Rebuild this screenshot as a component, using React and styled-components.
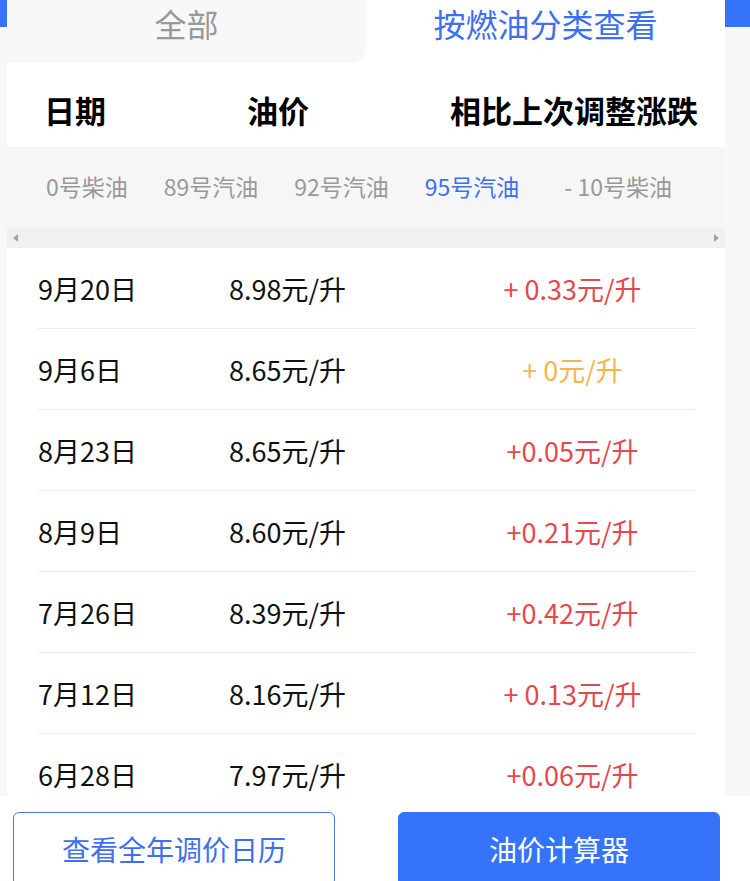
import React, { useState } from "react";
import styled, { createGlobalStyle } from "styled-components";

const GlobalStyle = createGlobalStyle`
  html, body {
    margin: 0;
    padding: 0;
    background: #f8f8f8;
    font-family: "Noto Sans CJK SC", "Noto Sans", sans-serif;
  }
  * {
    box-sizing: border-box;
  }
`;

const Page = styled.div`
  min-height: 881px;
  padding: 0 25px 90px 7px;
  background: linear-gradient(#3574fa 0 27px, #f8f8f8 27px);
`;

const Card = styled.div`
  background: #fff;
`;

const TopTabs = styled.div`
  display: flex;
  height: 63px;
  background: #fff;
`;

const TopTab = styled.div`
  flex: 1;
  text-align: center;
  font-size: 32px;
  line-height: 47px;
  color: ${props => (props.active ? "#3d6ff0" : "#999")};
  background: ${props => (props.active ? "#fff" : "#f8f8f8")};
  border-bottom-right-radius: ${props => (props.active ? "0" : "16px")};
`;

const HeaderRow = styled.div`
  display: flex;
  justify-content: space-between;
  align-items: center;
  height: 84px;
  padding: 8px 27px 0 37px;
  font-size: 31px;
  font-weight: 700;
  color: #000;
`;

const FuelBar = styled.div`
  display: flex;
  align-items: center;
  gap: 36px;
  height: 81px;
  padding: 0 0 3px 39px;
  background: #f6f6f6;
  white-space: nowrap;
  overflow: hidden;
`;

const FuelTab = styled.div`
  font-size: 23px;
  color: ${props => (props.active ? "#3d6ff0" : "#999")};
  margin-left: ${props => (props.extra ? "9px" : "0")};
`;

const ScrollTrack = styled.div`
  display: flex;
  justify-content: space-between;
  align-items: center;
  height: 20px;
  padding: 0 6px;
  background: #f1f1f1;
`;

const Arrow = styled.span`
  width: 0;
  height: 0;
  border-top: 4px solid transparent;
  border-bottom: 4px solid transparent;
  ${props =>
    props.dir === "left"
      ? "border-right: 5px solid #a3a3a3;"
      : "border-left: 5px solid #a3a3a3;"}
`;

const List = styled.div`
  padding: 0 30px 0 31px;
`;

const Row = styled.div`
  display: grid;
  grid-template-columns: 191px 221px 1fr;
  align-items: center;
  height: 81px;
  border-bottom: 1px solid #ececec;
  font-size: 27px;
  color: #111;
`;

const Change = styled.div`
  text-align: center;
  color: ${props => (props.flat ? "#f6b54c" : "#e5484d")};
`;

const BottomBar = styled.div`
  position: fixed;
  left: 0;
  right: 0;
  bottom: 0;
  height: 85px;
  padding: 16px 30px 0 13px;
  background: #fff;
  display: flex;
  justify-content: space-between;
  align-items: flex-start;
  overflow: hidden;
`;

const Button = styled.div`
  width: 322px;
  height: 74px;
  border-radius: 6px;
  display: flex;
  align-items: center;
  justify-content: center;
  font-size: 28px;
  border: 1px solid #3d6ff0;
  color: ${props => (props.primary ? "#fff" : "#3d6ff0")};
  background: ${props => (props.primary ? "#3574fa" : "#fff")};
  border-color: ${props => (props.primary ? "#3574fa" : "#4a7bea")};
`;

const fuels = ["0号柴油", "89号汽油", "92号汽油", "95号汽油", "- 10号柴油"];

const rows = [
  { date: "9月20日", price: "8.98元/升", change: "+ 0.33元/升" },
  { date: "9月6日", price: "8.65元/升", change: "+ 0元/升", flat: true },
  { date: "8月23日", price: "8.65元/升", change: "+0.05元/升" },
  { date: "8月9日", price: "8.60元/升", change: "+0.21元/升" },
  { date: "7月26日", price: "8.39元/升", change: "+0.42元/升" },
  { date: "7月12日", price: "8.16元/升", change: "+ 0.13元/升" },
  { date: "6月28日", price: "7.97元/升", change: "+0.06元/升" }
];

export default function App() {
  const [fuel, setFuel] = useState(3);
  return (
    <>
      <GlobalStyle />
      <Page>
        <Card>
          <TopTabs>
            <TopTab>全部</TopTab>
            <TopTab active>按燃油分类查看</TopTab>
          </TopTabs>
          <HeaderRow>
            <span>日期</span>
            <span>油价</span>
            <span>相比上次调整涨跌</span>
          </HeaderRow>
          <FuelBar>
            {fuels.map((f, i) => (
              <FuelTab
                key={f}
                active={i === fuel}
                extra={i === fuels.length - 1}
                onClick={() => setFuel(i)}
              >
                {f}
              </FuelTab>
            ))}
          </FuelBar>
          <ScrollTrack>
            <Arrow dir="left" />
            <Arrow dir="right" />
          </ScrollTrack>
          <List>
            {rows.map(r => (
              <Row key={r.date}>
                <div>{r.date}</div>
                <div>{r.price}</div>
                <Change flat={r.flat}>{r.change}</Change>
              </Row>
            ))}
          </List>
        </Card>
      </Page>
      <BottomBar>
        <Button>查看全年调价日历</Button>
        <Button primary>油价计算器</Button>
      </BottomBar>
    </>
  );
}
